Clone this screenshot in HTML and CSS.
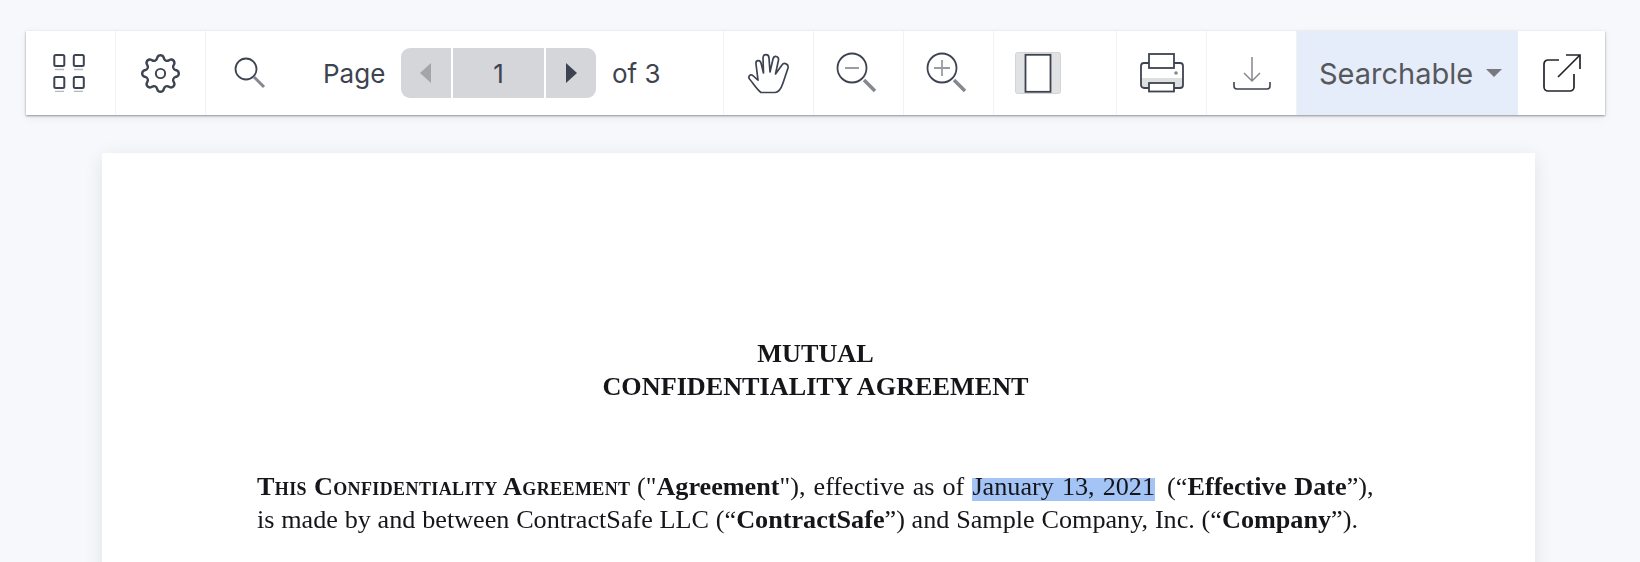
FILE: index.html
```html
<!DOCTYPE html>
<html lang="en">

<head>
    <meta charset="UTF-8">
    <meta name="viewport" content="width=device-width, initial-scale=1.0">
    <title>Mutual Confidentiality Agreement</title>
    <link rel="stylesheet" href="styles.css">
</head>

<body>
    <!-- Viewer toolbar -->
    <div class="toolbar">
        <button class="tool tool-grid" aria-label="Thumbnails">
            <svg width="32" height="38" viewBox="0 0 32 38" fill="none">
                <g stroke="#3d4350" stroke-width="2">
                    <rect x="1.300" y="1" width="10" height="11" rx="1.500" />
                    <rect x="20.800" y="1" width="10" height="11" rx="1.500" />
                    <rect x="1.300" y="23" width="10" height="11" rx="1.500" />
                    <rect x="20.800" y="23" width="10" height="11" rx="1.500" />
                </g>
                <g stroke="#b4b6bb" stroke-width="1.300">
                    <path d="M2 15.500h9M21 15.500h9M2 37.300h9M21 37.300h9" />
                </g>
            </svg>
        </button>
        <button class="tool tool-gear" aria-label="Settings">
            <svg width="39" height="39" viewBox="0 0 16 16" fill="#3d4350">
                <path d="M8 5.700a2.300 2.300 0 1 0 0 4.600 2.300 2.300 0 0 0 0-4.600zM6.500 8a1.500 1.500 0 1 1 3 0 1.500 1.500 0 0 1-3 0z" />
                <path d="M9.796 1.343c-.527-1.790-3.065-1.790-3.592 0l-.094.319a.873.873 0 0 1-1.255.520l-.292-.160c-1.640-.892-3.433.902-2.540 2.541l.159.292a.873.873 0 0 1-.520 1.255l-.319.094c-1.790.527-1.790 3.065 0 3.592l.319.094a.873.873 0 0 1 .520 1.255l-.160.292c-.892 1.640.901 3.434 2.541 2.540l.292-.159a.873.873 0 0 1 1.255.520l.094.319c.527 1.790 3.065 1.790 3.592 0l.094-.319a.873.873 0 0 1 1.255-.520l.292.160c1.640.893 3.434-.902 2.540-2.541l-.159-.292a.873.873 0 0 1 .520-1.255l.319-.094c1.790-.527 1.790-3.065 0-3.592l-.319-.094a.873.873 0 0 1-.520-1.255l.160-.292c.893-1.640-.902-3.433-2.541-2.540l-.292.159a.873.873 0 0 1-1.255-.520l-.094-.319zm-2.633.283c.246-.835 1.428-.835 1.674 0l.094.319a1.873 1.873 0 0 0 2.693 1.115l.291-.160c.764-.415 1.600.420 1.184 1.185l-.159.292a1.873 1.873 0 0 0 1.116 2.692l.318.094c.835.246.835 1.428 0 1.674l-.319.094a1.873 1.873 0 0 0-1.115 2.693l.160.291c.415.764-.420 1.600-1.185 1.184l-.291-.159a1.873 1.873 0 0 0-2.693 1.116l-.094.318c-.246.835-1.428.835-1.674 0l-.094-.319a1.873 1.873 0 0 0-2.692-1.115l-.292.160c-.764.415-1.600-.420-1.184-1.185l.159-.291A1.873 1.873 0 0 0 1.945 8.930l-.319-.094c-.835-.246-.835-1.428 0-1.674l.319-.094A1.873 1.873 0 0 0 3.060 4.377l-.160-.292c-.415-.764.420-1.600 1.185-1.184l.292.159a1.873 1.873 0 0 0 2.692-1.115l.094-.319z" />
            </svg>
        </button>

        <div class="pager">
            <svg class="pager-search" width="34" height="34" viewBox="0 0 34 34" fill="none">
                <circle cx="12" cy="12" r="10.500" stroke="#3d4350" stroke-width="1.800" />
                <path d="M20 20l10 10" stroke="#85888e" stroke-width="3" />
            </svg>
            <span class="pager-label">Page</span>
            <div class="stepper">
                <span class="step step-arrow">
                    <svg width="12" height="20" viewBox="0 0 12 20"><path d="M11 0v20L0 10z" fill="#a4a5a9" /></svg>
                </span>
                <span class="step step-num">1</span>
                <span class="step step-arrow">
                    <svg width="12" height="20" viewBox="0 0 12 20"><path d="M1 0v20l11-10z" fill="#3d4350" /></svg>
                </span>
            </div>
            <span class="pager-total">of 3</span>
        </div>

        <button class="tool" aria-label="Hand tool">
            <svg width="42" height="41" viewBox="0 0 42 41" fill="#fff" stroke="#3d4350" stroke-width="1.700" stroke-linejoin="round">
                <path d="M13 39.500C9 37 5 30 1.500 26 0 24 1.500 21 4 22c2 1 4 4 6 5L8 11c-.5-4 4-4.500 5-1l2.500 10L15 5c0-4.500 6-4.500 6 0l1 14L25 6c1-4 6-3 5.500 1L27.500 21 34 12c2-3 7-1 6 3l-5 15c-2 6-5 9.500-8 9.500z" />
            </svg>
        </button>
        <button class="tool tool-zoom" aria-label="Zoom out">
            <svg width="42" height="42" viewBox="0 0 42 42" fill="none">
                <circle cx="16" cy="16" r="14.500" stroke="#3d4350" stroke-width="1.800" />
                <path d="M9 16h14" stroke="#9a9ca1" stroke-width="2" />
                <path d="M28 28l11 11" stroke="#85888e" stroke-width="3.500" />
            </svg>
        </button>
        <button class="tool tool-zoom" aria-label="Zoom in">
            <svg width="42" height="42" viewBox="0 0 42 42" fill="none">
                <circle cx="16" cy="16" r="14.500" stroke="#3d4350" stroke-width="1.800" />
                <path d="M8 16h16M16 8v16" stroke="#9a9ca1" stroke-width="1.800" />
                <path d="M28 28l11 11" stroke="#85888e" stroke-width="3.500" />
            </svg>
        </button>
        <button class="tool tool-fit" aria-label="Fit page">
            <svg width="46" height="42" viewBox="0 0 46 42" fill="none">
                <rect x=".5" y=".5" width="45" height="41" rx="2" fill="#e1e2e4" stroke="#d3d4d7" />
                <rect x="10.500" y="2.800" width="25" height="37" fill="#fff" stroke="#3d4350" stroke-width="1.800" />
            </svg>
        </button>
        <button class="tool" aria-label="Print">
            <svg width="44" height="40" viewBox="0 0 44 40" fill="none">
                <path d="M1 25h42v8a2 2 0 0 1-2 2H3a2 2 0 0 1-2-2z" fill="#dedfe1" />
                <rect x="1" y="10" width="42" height="25" rx="3" stroke="#3d4350" stroke-width="1.800" />
                <rect x="9" y="1" width="25" height="14" fill="#fff" stroke="#3d4350" stroke-width="1.800" />
                <rect x="9" y="30" width="25" height="8.500" fill="#fff" stroke="#3d4350" stroke-width="1.800" />
                <circle cx="36" cy="20" r="1.800" fill="#85888e" />
            </svg>
        </button>
        <button class="tool" aria-label="Download">
            <svg width="38" height="34" viewBox="0 0 38 34" fill="none">
                <path d="M19 1v24M11 17l8 8 8-8" stroke="#85888e" stroke-width="1.500" />
                <path d="M1 26v4a3 3 0 0 0 3 3h30a3 3 0 0 0 3-3v-4" stroke="#3d4350" stroke-width="1.600" />
            </svg>
        </button>
        <div class="mode">
            <span>Searchable</span>
            <span class="mode-caret"></span>
        </div>
        <button class="tool tool-last" aria-label="Open in new window">
            <svg width="38" height="38" viewBox="0 0 38 38" fill="none" stroke="#22252b" stroke-width="1.700">
                <path d="M16 6H5a4 4 0 0 0-4 4v23a4 4 0 0 0 4 4h22a4 4 0 0 0 4-4V20" />
                <path d="M15 23L37 1M23 1h14v14" />
            </svg>
        </button>
    </div>

    <!-- Document page -->
    <div class="page">
        <h1 class="doc-title">MUTUAL<br>CONFIDENTIALITY AGREEMENT</h1>
        <p class="doc-text">
            <span class="doc-line"><b class="caps">This Confidentiality Agreement</b> <span class="doc-wide">("<b>Agreement</b>"), effective as of <mark class="hl">January 13, 2021</mark> (“<b>Effective Date</b>”),</span></span>
            <span class="doc-line doc-second">is made by and between ContractSafe LLC (“<b>ContractSafe</b>”) and Sample Company, Inc. (“<b>Company</b>”).</span>
        </p>
    </div>
</body>

</html>
```

FILE: styles.css
```css
html,
body {
    height: 562px;
    overflow: hidden;
}

body {
    margin: 0;
    padding: 31px 35px 0 26px;
    box-sizing: border-box;
    background-color: #f7f8fb;
    font-family: Inter, "Liberation Sans", sans-serif;
    color: #3d4350;
}

.toolbar {
    display: flex;
    height: 84px;
    background-color: white;
    box-shadow: 0 1px 2px rgba(60, 64, 75, 0.55), 0 3px 10px rgba(0, 0, 0, 0.05);
}

.tool {
    width: 90px;
    flex: none;
    padding: 0;
    border: none;
    border-right: 1px solid #f1f2f5;
    background: none;
    display: flex;
    align-items: center;
    justify-content: center;
}

.tool-grid {
    padding-right: 3px;
}

.tool-gear {
    padding-right: 1px;
}

.tool-zoom {
    padding-right: 3px;
}

.tool-fit {
    width: 123px;
    justify-content: flex-start;
    padding-left: 21px;
}

.tool-last {
    width: 89px;
    padding-right: 2px;
    border-right: none;
}

.pager {
    width: 518px;
    flex: none;
    display: flex;
    align-items: center;
    padding-left: 28px;
    box-sizing: border-box;
    border-right: 1px solid #f1f2f5;
    font-size: 26px;
}

.pager-search {
    margin-top: 1px;
    margin-right: 55px;
}

.pager-label {
    width: 78px;
}

.pager-total {
    margin-left: 16px;
}

.stepper {
    display: flex;
    gap: 2px;
    height: 50px;
    border-radius: 9px;
    overflow: hidden;
}

.step {
    background-color: #d5d6d9;
    display: flex;
    align-items: center;
    justify-content: center;
}

.step-arrow {
    width: 50px;
}

.step-num {
    width: 91px;
}

.mode {
    width: 221px;
    flex: none;
    display: flex;
    align-items: center;
    padding-left: 22px;
    box-sizing: border-box;
    background-color: #e6edfa;
    color: #56585c;
    font-size: 29px;
}

.mode-caret {
    margin-left: 13px;
    border-left: 8px solid transparent;
    border-right: 8px solid transparent;
    border-top: 8px solid #77797d;
}

.page {
    width: 1433px;
    height: 700px;
    margin: 38px 0 0 76px;
    padding-top: 184px;
    box-sizing: border-box;
    background-color: white;
    box-shadow: 0 4px 18px rgba(0, 0, 0, 0.09);
    font-family: "Liberation Serif", serif;
    color: #15151a;
}

.doc-title {
    margin: 0;
    padding-right: 6px;
    text-align: center;
    font-size: 26.200px;
    line-height: 33px;
    font-weight: bold;
    filter: blur(0.4px);
}

.doc-text {
    margin: 67px 0 0 155px;
    font-size: 26.200px;
    line-height: 33px;
    filter: blur(0.4px);
}

.doc-line {
    display: block;
    white-space: nowrap;
}

.doc-wide {
    word-spacing: 1.500px;
}

.doc-second {
    word-spacing: 0.200px;
}

.caps {
    font-variant: small-caps;
    letter-spacing: 0.380px;
}

.hl {
    margin-right: 4px;
    color: inherit;
    background: linear-gradient(#a4c4f6, #a4c4f6) no-repeat 0 100% / 100% 23px;
}
```
